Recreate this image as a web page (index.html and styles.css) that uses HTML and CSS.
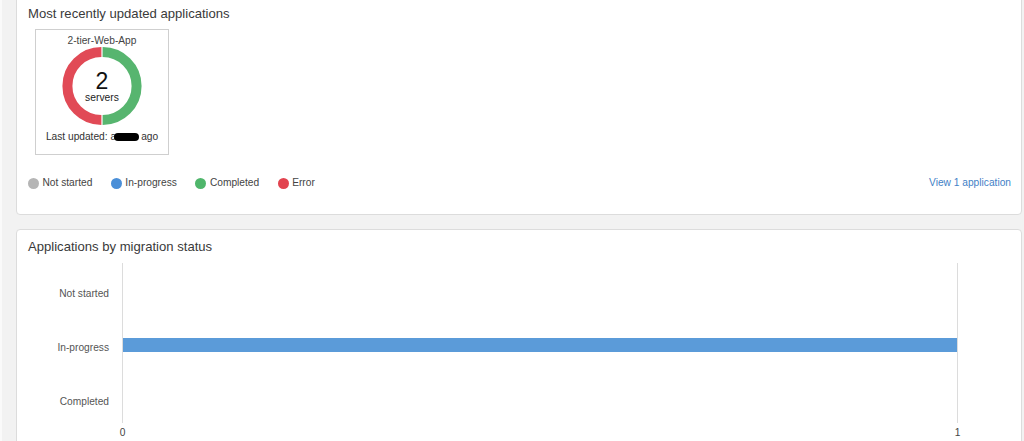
FILE: index.html
```html
<!DOCTYPE html>
<html>
<head>
<meta charset="utf-8">
<link rel="stylesheet" href="styles.css">
</head>
<body>
<div class="page">
  <section class="panel panel-recent">
    <h2 class="panel-title">Most recently updated applications</h2>
    <div class="card">
      <div class="card-name">2-tier-Web-App</div>
      <div class="donut">
        <svg class="donut-ring" width="80" height="80" viewBox="0 0 80 80">
          <path d="M40.6 6 A34 34 0 0 1 40.6 74" fill="none" stroke="#57b56f" stroke-width="10"/>
          <path d="M39.4 74 A34 34 0 0 1 39.4 6" fill="none" stroke="#e14a56" stroke-width="10"/>
        </svg>
        <div class="donut-text">
          <div class="donut-num">2</div>
          <div class="donut-label">servers</div>
        </div>
      </div>
      <div class="card-updated">Last updated: a<span class="redact"></span>ago</div>
    </div>
    <div class="legend-row">
      <ul class="legend">
        <li class="legend-item"><span class="dot dot-gray"></span>Not started</li>
        <li class="legend-item"><span class="dot dot-blue"></span>In-progress</li>
        <li class="legend-item"><span class="dot dot-green"></span>Completed</li>
        <li class="legend-item"><span class="dot dot-red"></span>Error</li>
      </ul>
      <a class="view-link" href="#">View 1 application</a>
    </div>
  </section>

  <section class="panel panel-status">
    <h2 class="panel-title">Applications by migration status</h2>
    <div class="chart">
      <div class="y-labels">
        <div class="y-label">Not started</div>
        <div class="y-label">In-progress</div>
        <div class="y-label">Completed</div>
      </div>
      <div class="plot">
        <div class="band"></div>
        <div class="band"><div class="bar" style="width:100%"></div></div>
        <div class="band"></div>
      </div>
      <div class="ticks">
        <span class="tick">0</span>
        <span class="tick">1</span>
      </div>
    </div>
  </section>
</div>
</body>
</html>
```

FILE: styles.css
```css
html, body {
  margin: 0;
  padding: 0;
  height: 100%;
  overflow: hidden;
}
body {
  background: #f2f2f2;
  font-family: "Liberation Sans", Arial, sans-serif;
  color: #333;
}
.page {
  border-left: 2px solid #fafafa;
  padding: 0 2px 0 14px;
  display: flex;
  flex-direction: column;
  gap: 14px;
}
.panel {
  background: #fff;
  border: 1px solid #dcdcdc;
  border-radius: 4px;
  padding: 0 10px 0 11px;
}
.panel-recent {
  margin-top: -5px;
  padding-top: 10px;
  padding-bottom: 24px;
}
.panel-status {
  padding-top: 9px;
  height: 240px;
}
.panel-title {
  margin: 0;
  font-size: 13.1px;
  line-height: 16px;
  font-weight: normal;
  color: #3a3a3a;
}
.panel-recent .panel-title {
  margin-bottom: 7px;
}
.panel-status .panel-title {
  margin-bottom: 8px;
}
.card {
  width: 132px;
  border: 1px solid #cfcfcf;
  margin-left: 7px;
  padding: 4px 0 10px;
  display: flex;
  flex-direction: column;
  align-items: center;
  font-size: 10.2px;
  line-height: 14px;
  color: #333;
}
.card-name {
  color: #444;
}
.donut {
  margin-top: -2px;
  width: 80px;
  height: 80px;
  display: grid;
}
.donut-ring,
.donut-text {
  grid-area: 1 / 1;
}
.donut-ring {
  display: block;
}
.donut-text {
  display: flex;
  flex-direction: column;
  align-items: center;
  padding-top: 26px;
}
.donut-num {
  font-size: 23px;
  line-height: 18px;
  height: 18px;
  color: #111;
}
.donut-label {
  margin-top: 2px;
  font-size: 10.3px;
  line-height: 11px;
  color: #222;
}
.card-updated {
  margin-top: 4px;
  white-space: nowrap;
  display: flex;
  align-items: center;
}
.redact {
  display: inline-block;
  width: 25px;
  height: 8px;
  border-radius: 4px;
  background: #000;
  margin: 0 2px 0 -2px;
}
.legend-row {
  margin-top: 21px;
  display: flex;
  justify-content: space-between;
  align-items: center;
  font-size: 10.2px;
  line-height: 14px;
}
.legend {
  list-style: none;
  margin: 0;
  padding: 0;
  display: flex;
  gap: 18.5px;
}
.legend-item {
  display: flex;
  align-items: center;
  color: #444;
}
.dot {
  width: 11px;
  height: 11px;
  border-radius: 50%;
  margin-right: 3.5px;
}
.dot-gray { background: #b5b5b5; }
.dot-blue { background: #4a8fd8; }
.dot-green { background: #4fb66b; }
.dot-red { background: #e2434f; }
.view-link {
  color: #3f7fc6;
  text-decoration: none;
}
.chart {
  display: grid;
  grid-template-columns: 81px 849px 1fr;
  align-items: start;
  font-size: 10.2px;
  color: #555;
}
.y-labels {
  height: 160px;
  padding-top: 4px;
  box-sizing: border-box;
  display: flex;
  flex-direction: column;
  text-align: right;
}
.y-label {
  flex: none;
  height: 54px;
  line-height: 54px;
}
.plot {
  margin-left: 13px;
  width: 834px;
  height: 156px;
  padding-top: 4px;
  border-left: 1px solid #dcdcdc;
  border-right: 1px solid #dcdcdc;
  display: flex;
  flex-direction: column;
}
.band {
  flex: 1;
  display: flex;
  align-items: center;
}
.bar {
  height: 14px;
  background: #5b9bd9;
}
.ticks {
  grid-column: 2;
  margin-left: 13px;
  margin-top: 4px;
  width: 836px;
  display: flex;
  justify-content: space-between;
  line-height: 12px;
  color: #444;
}
.tick {
  width: 1px;
  display: flex;
  justify-content: center;
}
```
